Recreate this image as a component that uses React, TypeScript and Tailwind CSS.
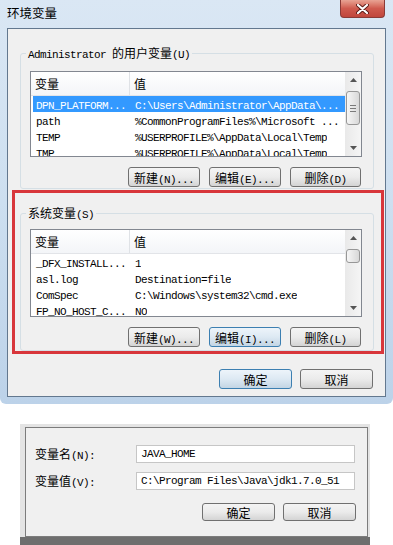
import React from "react";

const CJK_RE = /([\u3000-\u9fff\uff00-\uffef]+)/;

// split a label so the CJK part and the ASCII part get their own font
function Mixed({ text }: { text: string }) {
  const parts = text.split(CJK_RE).filter(Boolean);
  return (
    <>
      {parts.map((p, i) =>
        CJK_RE.test(p) ? (
          <span key={i} className="font-['Noto_Sans_CJK_SC',sans-serif] text-[12px] tracking-normal">
            {p}
          </span>
        ) : (
          <span key={i} className="font-['Liberation_Mono',monospace] text-[11px] tracking-[-0.6px] whitespace-pre">
            {p}
          </span>
        ),
      )}
    </>
  );
}

type Row = [string, string];

const USER_ROWS: Row[] = [
  ["DPN_PLATFORM...", "C:\\Users\\Administrator\\AppData\\..."],
  ["path", "%CommonProgramFiles%\\Microsoft ..."],
  ["TEMP", "%USERPROFILE%\\AppData\\Local\\Temp"],
  ["TMP", "%USERPROFILE%\\AppData\\Local\\Temp"],
];

const SYSTEM_ROWS: Row[] = [
  ["_DFX_INSTALL...", "1"],
  ["asl.log", "Destination=file"],
  ["ComSpec", "C:\\Windows\\system32\\cmd.exe"],
  ["FP_NO_HOST_C...", "NO"],
];

function Btn({ label, className, blue }: { label: string; className: string; blue?: boolean }) {
  return (
    <div
      className={
        "flex items-center justify-center rounded-[3px] border leading-none text-black " +
        (blue
          ? "border-[#3c7fb1] bg-linear-to-b from-[#edf4fa] via-[#dde9f3] to-[#c3d5e4] "
          : "border-[#707070] bg-linear-to-b from-[#f4f4f4] via-[#ebebeb] to-[#d4d4d4] ") +
        className
      }
    >
      <span>
        <Mixed text={label} />
      </span>
    </div>
  );
}

function Arrow({ up }: { up?: boolean }) {
  return (
    <div className="h-[16px] flex items-center justify-center">
      <svg width="7" height="4" viewBox="0 0 7 4">
        <path d={up ? "M0 4 L3.5 0 L7 4 Z" : "M0 0 L3.5 4 L7 0 Z"} fill="#555" />
      </svg>
    </div>
  );
}

function VarList({ rows, heightClass, thumbClass, grip, selected }: { rows: Row[]; heightClass: string; thumbClass: string; grip?: boolean; selected?: boolean }) {
  return (
    <div className={"ml-[9px] w-[332px] border border-[#828790] bg-white flex overflow-hidden " + heightClass}>
      <div className="flex-1 flex flex-col overflow-hidden">
        <div className="h-[24px] shrink-0 flex bg-linear-to-b from-white to-[#f3f5f8] border-b border-[#e2e4e8]">
          <div className="w-[99px] pl-[4px] flex items-center border-r border-[#dfe2e6]">
            <Mixed text="变量" />
          </div>
          <div className="pl-[4px] flex items-center">
            <Mixed text="值" />
          </div>
        </div>
        {rows.map(([name, value], i) => {
          const sel = selected && i === 0;
          return (
            <div
              key={name}
              className={"ml-[2px] h-[16px] shrink-0 flex items-center leading-[16px] " + (sel ? "bg-[#3399ff] text-white" : "text-black")}
            >
              <div className="w-[97px] pl-[3px] overflow-hidden whitespace-nowrap">
                <Mixed text={name} />
              </div>
              <div className="pl-[5px] overflow-hidden whitespace-nowrap">
                <Mixed text={value} />
              </div>
            </div>
          );
        })}
      </div>
      <div className="w-[16px] shrink-0 flex flex-col bg-linear-to-r from-[#e9e9e9] to-[#f5f5f5]">
        <Arrow up />
        <div className="flex-1">
          <div className={"mx-[1px] mt-[3px] rounded-[3px] border border-[#979797] bg-linear-to-r from-[#f6f6f6] to-[#d8d8d8] flex flex-col items-center justify-center gap-[2px] " + thumbClass}>
            {grip && (
              <>
                <div className="w-[6px] h-px bg-[#7a7a7a]" />
                <div className="w-[6px] h-px bg-[#7a7a7a]" />
                <div className="w-[6px] h-px bg-[#7a7a7a]" />
              </>
            )}
          </div>
        </div>
        <Arrow />
      </div>
    </div>
  );
}

export default function App() {
  return (
    <div className="w-[393px] h-[545px] bg-white overflow-hidden text-black">
      {/* Environment variables window */}
      <div className="h-[404px] rounded-b-[6px] bg-linear-to-b from-[#dae7f4] via-[#cddff0] to-[#bcd2e9] flex flex-col">
        <div className="h-[28px] shrink-0 flex items-start justify-between">
          <div className="pl-[7px] pt-[4px] leading-[18px] font-['Noto_Sans_CJK_SC',sans-serif] text-[12.5px]">环境变量</div>
          <div className="mr-[8px] w-[45px] h-[18px] rounded-b-[4px] border border-t-0 border-[#8a3a36] bg-linear-to-b from-[#e8a394] via-[#cf5a4e] to-[#c0463c] flex items-center justify-center">
            <svg width="13" height="10" viewBox="0 0 13 10">
              <path d="M2 1 L11 9 M11 1 L2 9" stroke="#5a1a16" strokeWidth="4" strokeLinecap="round" />
              <path d="M2 1 L11 9 M11 1 L2 9" stroke="#fff" strokeWidth="2.2" strokeLinecap="round" />
            </svg>
          </div>
        </div>

        <div className="ml-[7px] w-[379px] h-[369px] border border-[#63788f] bg-[#f0f0f0] flex flex-col">
          {/* user variables */}
          <fieldset className="ml-[12px] mt-[16px] w-[354px] border border-[#d5dfe5] rounded-[3px] pb-[1px]">
            <legend className="ml-[5px] px-[2px] leading-[14px]">
              <Mixed text="Administrator 的用户变量(U)" />
            </legend>
            <div className="mt-[9px]">
              <VarList rows={USER_ROWS} heightClass="h-[86px]" thumbClass="h-[34px]" grip selected />
            </div>
            <div className="mt-[10px] pr-[12px] flex justify-end gap-[9px]">
              <Btn label="新建(N)..." className="w-[72px] h-[20px]" />
              <Btn label="编辑(E)..." className="w-[72px] h-[20px]" />
              <Btn label="删除(D)" className="w-[71px] h-[20px]" />
            </div>
          </fieldset>

          {/* highlighted system variables */}
          <div className="ml-[4px] mt-[1px] w-[372px] h-[164px] border-[3px] border-[#d8363b]">
            <fieldset className="ml-[5px] mt-[12px] w-[354px] border border-[#d5dfe5] rounded-[3px] pb-[3px]">
              <legend className="ml-[5px] px-[2px] leading-[14px]">
                <Mixed text="系统变量(S)" />
              </legend>
              <div className="mt-[7px]">
                <VarList rows={SYSTEM_ROWS} heightClass="h-[88px]" thumbClass="h-[14px]" />
              </div>
              <div className="mt-[10px] pr-[12px] flex justify-end gap-[9px]">
                <Btn label="新建(W)..." className="w-[72px] h-[20px]" />
                <Btn label="编辑(I)..." className="w-[72px] h-[20px]" blue />
                <Btn label="删除(L)" className="w-[71px] h-[20px]" />
              </div>
            </fieldset>
          </div>

          <div className="mt-[15px] pr-[12px] flex justify-end gap-[8px]">
            <Btn label="确定" className="w-[73px] h-[20px]" blue />
            <Btn label="取消" className="w-[73px] h-[20px]" />
          </div>
        </div>
      </div>

      {/* Edit system variable dialog */}
      <div className="ml-[20px] mt-[20px] w-[350px] h-[121px] bg-[#e4e4e4] flex flex-col">
        <div className="ml-[5px] mt-[3px] w-[343px] h-[110px] border border-[#7c7c7c] bg-[#f0f0f0] flex flex-col">
          <div className="mt-[17px] h-[18px] flex items-center">
            <div className="w-[110px] pl-[9px] leading-[18px]">
              <Mixed text="变量名(N):" />
            </div>
            <div className="w-[219px] h-[18px] border border-[#c6c6c6] bg-white pl-[4px] flex items-center leading-none">
              <Mixed text="JAVA_HOME" />
            </div>
          </div>
          <div className="mt-[9px] h-[18px] flex items-center">
            <div className="w-[110px] pl-[9px] leading-[18px]">
              <Mixed text="变量值(V):" />
            </div>
            <div className="w-[219px] h-[18px] border border-[#c6c6c6] bg-white pl-[4px] flex items-center leading-none">
              <Mixed text="C:\Program Files\Java\jdk1.7.0_51" />
            </div>
          </div>
          <div className="mt-[13px] pr-[11px] flex justify-end gap-[8px]">
            <Btn label="确定" className="w-[73px] h-[18px]" />
            <Btn label="取消" className="w-[73px] h-[18px]" />
          </div>
        </div>
        <div className="mt-auto h-[8px] bg-[#6e6e6e]" />
      </div>
    </div>
  );
}
